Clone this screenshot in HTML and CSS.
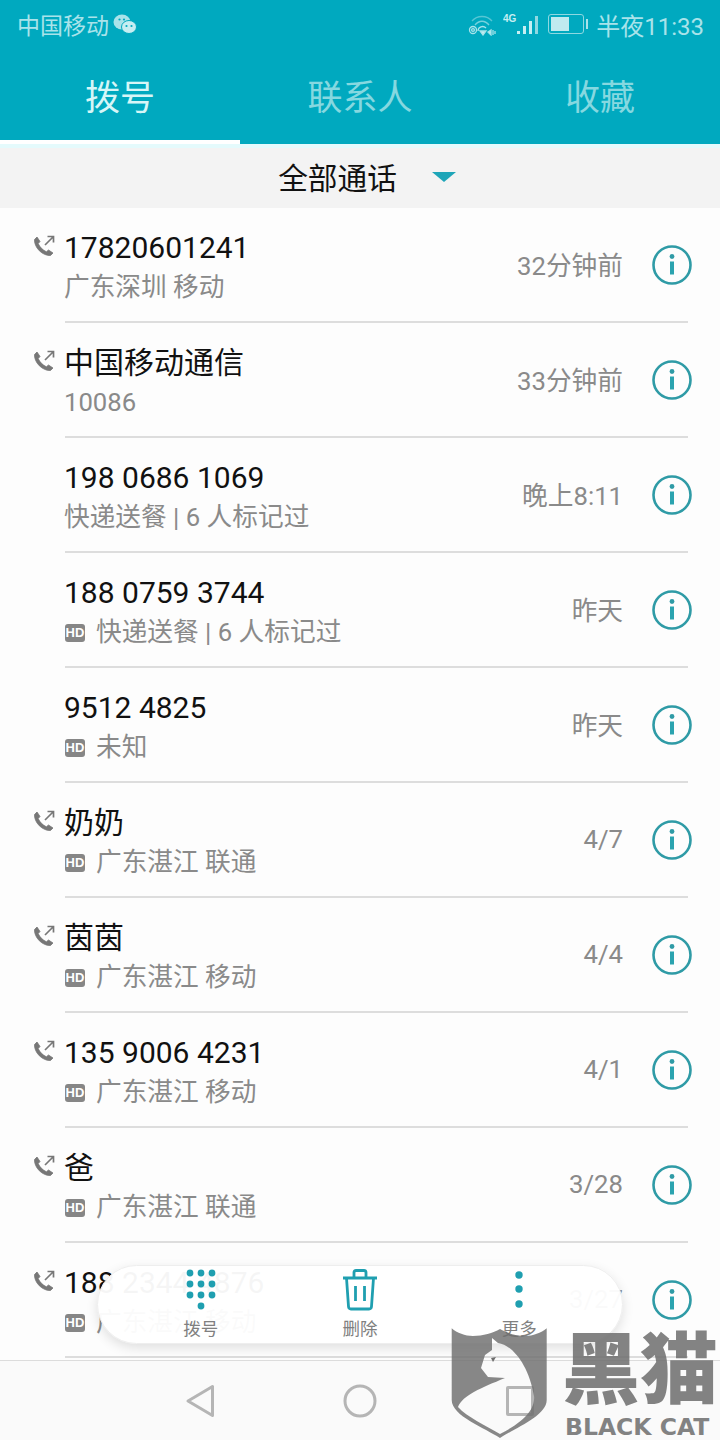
FILE: index.html
```html
<!DOCTYPE html>
<html lang="zh-CN">
<head>
    <meta charset="UTF-8">
    <meta name="viewport" content="width=device-width, initial-scale=1.0">
    <title>拨号</title>
    <link rel="stylesheet" href="styles.css">
</head>
<body>
    <svg class="sprites" width="0" height="0">
        <symbol id="call-out" viewBox="0 0 22 22">
            <path d="M4 2 7 6.5 5.2 8.6C6.6 12 10 15.4 13.4 16.8L15.5 15 20 18 17.5 20.5C9.5 21 1 12.5 1.5 4.5Z" fill="#777" stroke="#777" stroke-width=".8" stroke-linejoin="round"/>
            <path d="M12 10 20 2M14.5 1.5H20.5V7.5" fill="none" stroke="#777" stroke-width="1.7"/>
        </symbol>
        <symbol id="info" viewBox="0 0 40 40">
            <circle cx="20" cy="20" r="18.5" fill="none" stroke="#2f9ba6" stroke-width="2.6"/>
            <circle cx="20" cy="11.5" r="2.4" fill="#2f9ba6"/>
            <rect x="18" y="16.5" width="4" height="13" fill="#2ba3af"/>
        </symbol>
    </svg>

    <header class="header">
        <div class="status">
            <div class="status-left">
                <span>中国移动</span>
                <svg class="wechat" width="24" height="22" viewBox="0 0 24 22">
                    <ellipse cx="9" cy="9" rx="8.5" ry="7.5" fill="#a9e3ea"/>
                    <ellipse cx="16" cy="14" rx="7.5" ry="6.5" fill="#c6eef2" stroke="#00a9bf"/>
                    <circle cx="13.5" cy="13" r="1.1" fill="#00a9bf"/>
                    <circle cx="18.5" cy="13" r="1.1" fill="#00a9bf"/>
                    <circle cx="6.5" cy="6.5" r="1.1" fill="#00a9bf"/>
                    <circle cx="11" cy="6.5" r="1.1" fill="#00a9bf"/>
                </svg>
            </div>
            <div class="status-right">
                <svg width="30" height="24" viewBox="0 0 30 24" fill="none" stroke="#a9e3ea" stroke-width="1.3">
                    <path d="M5 9C10 3 20 3 25 9" opacity=".5"/>
                    <path d="M8 13C12 8 18 8 22 13" opacity=".7"/>
                    <path d="M11 19C11 15 16 13 19 16"/>
                    <circle cx="6" cy="18" r="3.5"/>
                    <circle cx="6" cy="18" r="1.4"/>
                    <path d="M13 19H19L16 23ZM21 20 24 18V23ZM26 18V23M28 19V22" fill="#c6eef2"/>
                </svg>
                <svg class="signal" width="36" height="24" viewBox="0 0 36 24">
                    <text x="0" y="10" class="signal-type">4G</text>
                    <rect x="14" y="19" width="3" height="3" fill="#c6eef2"/>
                    <rect x="20" y="14" width="3" height="8" fill="#c6eef2"/>
                    <rect x="26" y="9" width="3" height="13" fill="#c6eef2"/>
                    <rect x="32" y="4" width="3" height="18" fill="#8fd8e1"/>
                </svg>
                <div class="battery"><div class="battery-level"></div></div>
                <div class="battery-tip"></div>
                <span class="clock">半夜11:33</span>
            </div>
        </div>
        <nav class="tabs">
            <div class="tab tab-active">拨号</div>
            <div class="tab">联系人</div>
            <div class="tab">收藏</div>
        </nav>
    </header>

    <div class="filter">
        <span>全部通话</span>
        <div class="filter-arrow"></div>
    </div>

    <main class="list">
        <div class="row">
            <div class="row-icon"><svg class="call" width="22" height="22"><use href="#call-out"/></svg></div>
            <div class="row-body">
                <div class="row-text">
                    <div class="name">17820601241</div>
                    <div class="sub">广东深圳 移动</div>
                </div>
                <div class="time">32分钟前</div>
                <svg class="info" width="40" height="40"><use href="#info"/></svg>
            </div>
        </div>
        <div class="row">
            <div class="row-icon"><svg class="call" width="22" height="22"><use href="#call-out"/></svg></div>
            <div class="row-body">
                <div class="row-text">
                    <div class="name">中国移动通信</div>
                    <div class="sub">10086</div>
                </div>
                <div class="time">33分钟前</div>
                <svg class="info" width="40" height="40"><use href="#info"/></svg>
            </div>
        </div>
        <div class="row">
            <div class="row-icon"></div>
            <div class="row-body">
                <div class="row-text">
                    <div class="name">198 0686 1069</div>
                    <div class="sub">快递送餐 | 6 人标记过</div>
                </div>
                <div class="time">晚上8:11</div>
                <svg class="info" width="40" height="40"><use href="#info"/></svg>
            </div>
        </div>
        <div class="row">
            <div class="row-icon"></div>
            <div class="row-body">
                <div class="row-text">
                    <div class="name">188 0759 3744</div>
                    <div class="sub"><span class="hd">HD</span>快递送餐 | 6 人标记过</div>
                </div>
                <div class="time">昨天</div>
                <svg class="info" width="40" height="40"><use href="#info"/></svg>
            </div>
        </div>
        <div class="row">
            <div class="row-icon"></div>
            <div class="row-body">
                <div class="row-text">
                    <div class="name">9512 4825</div>
                    <div class="sub"><span class="hd">HD</span>未知</div>
                </div>
                <div class="time">昨天</div>
                <svg class="info" width="40" height="40"><use href="#info"/></svg>
            </div>
        </div>
        <div class="row">
            <div class="row-icon"><svg class="call" width="22" height="22"><use href="#call-out"/></svg></div>
            <div class="row-body">
                <div class="row-text">
                    <div class="name">奶奶</div>
                    <div class="sub"><span class="hd">HD</span>广东湛江 联通</div>
                </div>
                <div class="time">4/7</div>
                <svg class="info" width="40" height="40"><use href="#info"/></svg>
            </div>
        </div>
        <div class="row">
            <div class="row-icon"><svg class="call" width="22" height="22"><use href="#call-out"/></svg></div>
            <div class="row-body">
                <div class="row-text">
                    <div class="name">茵茵</div>
                    <div class="sub"><span class="hd">HD</span>广东湛江 移动</div>
                </div>
                <div class="time">4/4</div>
                <svg class="info" width="40" height="40"><use href="#info"/></svg>
            </div>
        </div>
        <div class="row">
            <div class="row-icon"><svg class="call" width="22" height="22"><use href="#call-out"/></svg></div>
            <div class="row-body">
                <div class="row-text">
                    <div class="name">135 9006 4231</div>
                    <div class="sub"><span class="hd">HD</span>广东湛江 移动</div>
                </div>
                <div class="time">4/1</div>
                <svg class="info" width="40" height="40"><use href="#info"/></svg>
            </div>
        </div>
        <div class="row">
            <div class="row-icon"><svg class="call" width="22" height="22"><use href="#call-out"/></svg></div>
            <div class="row-body">
                <div class="row-text">
                    <div class="name">爸</div>
                    <div class="sub"><span class="hd">HD</span>广东湛江 联通</div>
                </div>
                <div class="time">3/28</div>
                <svg class="info" width="40" height="40"><use href="#info"/></svg>
            </div>
        </div>
        <div class="row">
            <div class="row-icon"><svg class="call" width="22" height="22"><use href="#call-out"/></svg></div>
            <div class="row-body">
                <div class="row-text">
                    <div class="name">188 2344 4876</div>
                    <div class="sub"><span class="hd">HD</span>广东湛江 移动</div>
                </div>
                <div class="time">3/27</div>
                <svg class="info" width="40" height="40"><use href="#info"/></svg>
            </div>
        </div>
    </main>

    <footer class="softkeys">
        <svg width="30" height="34" viewBox="0 0 30 34"><path d="M27.5 2.5V31.5L3 17Z" fill="none" stroke="#b5b5b5" stroke-width="3" stroke-linejoin="round"/></svg>
        <svg width="34" height="34" viewBox="0 0 34 34"><circle cx="17" cy="17" r="15" fill="none" stroke="#b5b5b5" stroke-width="3"/></svg>
        <div class="softkey-square"></div>
    </footer>

    <div class="actions">
        <div class="action">
            <svg width="30" height="42" viewBox="0 0 30 42" fill="#1f9fb0">
                <circle cx="4" cy="4" r="3.4"/><circle cx="15" cy="4" r="3.4"/><circle cx="26" cy="4" r="3.4"/>
                <circle cx="4" cy="15" r="3.4"/><circle cx="15" cy="15" r="3.4"/><circle cx="26" cy="15" r="3.4"/>
                <circle cx="4" cy="26" r="3.4"/><circle cx="15" cy="26" r="3.4"/><circle cx="26" cy="26" r="3.4"/>
                <circle cx="15" cy="37" r="3.4"/>
            </svg>
            <span>拨号</span>
        </div>
        <div class="action">
            <svg width="36" height="42" viewBox="0 0 36 42" fill="none" stroke="#1f9fb0" stroke-width="2.8" stroke-linejoin="round">
                <path d="M1 9H35M12 8V3.5C12 2 13 1.5 14 1.5H22C23 1.5 24 2 24 3.5V8"/>
                <path d="M4.5 9 6.5 37.5C6.6 39 7.5 40 9 40H27C28.5 40 29.4 39 29.5 37.5L31.5 9"/>
                <path d="M13.5 17V32M22.5 17V32"/>
            </svg>
            <span>删除</span>
        </div>
        <div class="action">
            <svg width="10" height="42" viewBox="0 0 10 42" fill="#1f9fb0">
                <circle cx="5" cy="6" r="3.7"/><circle cx="5" cy="20" r="3.7"/><circle cx="5" cy="35" r="3.7"/>
            </svg>
            <span>更多</span>
        </div>
    </div>

    <div class="watermark">
        <svg class="watermark-shield" width="115" height="120" viewBox="0 0 115 120">
            <path fill-rule="evenodd" fill="#6e6e6e" fill-opacity=".82" d="M6.7 8.3C12 13 20 16 28 16 38 16 48 13 55 9 62 13 72 16 80 16 88 16 96 13 101.7 8.3V80C101.7 96 70 108 55 118 40 108 6.7 96 6.7 80ZM47 18 53 23C68 25 84 46 89 76 90 88 82 100 55 114 40 105 22 97 13 87 18 75 36 68 60 58L43 57 36 48 40 35 47 30Z"/>
            <path d="M46 38 51 37 48 42Z" fill="#6e6e6e"/>
        </svg>
        <div class="watermark-text">
            <div class="watermark-cn">黑猫</div>
            <div class="watermark-en">BLACK CAT</div>
        </div>
    </div>
</body>
</html>
```

FILE: styles.css
```css
body {
    font-family: Roboto, "Noto Sans CJK SC", sans-serif;
    background-color: #fdfdfd;
    margin: 0;
    width: 720px;
    height: 1440px;
    overflow: hidden;
    position: relative;
    display: flex;
    flex-direction: column;
}
.sprites {
    position: absolute;
}
.header {
    background-color: #00a9bf;
    height: 144px;
    flex-shrink: 0;
    display: flex;
    flex-direction: column;
}
.status {
    height: 50px;
    box-sizing: border-box;
    padding: 0 16px 2px 17px;
    display: flex;
    justify-content: space-between;
    align-items: center;
    color: #a9e3ea;
    font-size: 23px;
}
.status-left {
    display: flex;
    align-items: center;
    gap: 4px;
}
.status-right {
    display: flex;
    align-items: center;
}
.signal {
    margin: 0 9px 0 6px;
}
.signal-type {
    font: bold 10px "Liberation Sans", sans-serif;
    fill: #c6eef2;
}
.battery {
    width: 36px;
    height: 20px;
    box-sizing: border-box;
    border: 1.5px solid #8fd8e1;
    border-radius: 3px;
    padding: 2px;
}
.battery-level {
    width: 18px;
    height: 100%;
    background-color: #bfeaef;
}
.battery-tip {
    width: 2px;
    height: 10px;
    margin-left: 2px;
    background-color: #a9e3ea;
}
.clock {
    margin-left: 8px;
    font-size: 24px;
}
.tabs {
    flex: 1;
    display: flex;
}
.tab {
    flex: 1;
    display: flex;
    align-items: center;
    justify-content: center;
    font-size: 35px;
    color: #86d8e0;
    padding-bottom: 6px;
}
.tab-active {
    color: #d6f6f7;
    padding-bottom: 2px;
    border-bottom: 4px solid #fff;
}
.filter {
    height: 60px;
    flex-shrink: 0;
    background-color: #f3f3f3;
    border-top: 4px solid #e4fafc;
    display: flex;
    align-items: center;
    justify-content: center;
    gap: 35px;
    padding-left: 14px;
    font-size: 29.7px;
    color: #111;
}
.filter span {
    margin-bottom: 3px;
}
.filter-arrow {
    width: 0;
    height: 0;
    border-left: 12px solid transparent;
    border-right: 12px solid transparent;
    border-top: 10px solid #1ea5b8;
    margin-bottom: 2px;
}
.list {
    flex: 1;
    min-height: 0;
    overflow: hidden;
}
.row {
    height: 115px;
    display: flex;
}
.row-icon {
    width: 65px;
    flex-shrink: 0;
    box-sizing: border-box;
    padding: 27px 0 0 33px;
}
.call {
    display: block;
}
.row-body {
    flex: 1;
    margin-right: 32px;
    border-bottom: 2px solid #dddddd;
    display: flex;
    align-items: center;
}
.row-text {
    flex: 1;
    margin-left: -1px;
    padding-top: 6px;
}
.name {
    font-size: 30px;
    line-height: 39px;
    color: #111;
}
.sub {
    margin-top: 1px;
    font-size: 25.7px;
    line-height: 39px;
    color: #8a8a8a;
    display: flex;
    align-items: center;
    white-space: pre;
}
.hd {
    width: 20px;
    height: 18px;
    margin: 0 11px 0 1px;
    border-radius: 3px;
    background-color: #868686;
    color: #fff;
    font: bold 13px/18px "Liberation Sans", sans-serif;
    text-align: center;
}
.time {
    font-size: 25.7px;
    color: #8a8a8a;
    padding-bottom: 2px;
}
.info {
    margin: 0 -4px 0 29px;
}
.softkeys {
    height: 79px;
    flex-shrink: 0;
    margin-top: 2px;
    background-color: #fafafa;
    border-top: 1px solid #dcdcdc;
    display: grid;
    grid-template-columns: 160px 160px 160px;
    justify-content: center;
    justify-items: center;
    align-items: center;
}
.softkey-square {
    width: 28px;
    height: 30px;
    border: 3px solid #b5b5b5;
    box-sizing: border-box;
    border-radius: 2px;
}
.actions {
    position: absolute;
    left: 97px;
    top: 1265px;
    width: 526px;
    height: 79px;
    box-sizing: border-box;
    padding: 0 23px;
    background-color: rgba(255, 255, 255, 0.96);
    border: 1px solid #eeeeee;
    border-radius: 40px;
    box-shadow: 0 4px 12px rgba(0, 0, 0, 0.12);
    display: flex;
}
.action {
    flex: 1;
    display: flex;
    flex-direction: column;
    align-items: center;
    justify-content: flex-end;
    padding-bottom: 2px;
    font-size: 17.5px;
    line-height: 24px;
    color: #808080;
}
.action svg {
    margin-bottom: 6px;
}
.watermark {
    position: absolute;
    left: 445px;
    top: 1320px;
    width: 275px;
    height: 120px;
    display: flex;
}
.watermark-shield {
    flex-shrink: 0;
}
.watermark-text {
    margin-left: 2px;
    padding-top: 9px;
    color: #6e6e6e;
    opacity: 0.85;
}
.watermark-cn {
    font-size: 78px;
    line-height: 86px;
    font-weight: 900;
    white-space: nowrap;
}
.watermark-en {
    font: bold 23.5px/24px "DejaVu Sans", sans-serif;
    white-space: nowrap;
    margin-left: 3px;
}
```
